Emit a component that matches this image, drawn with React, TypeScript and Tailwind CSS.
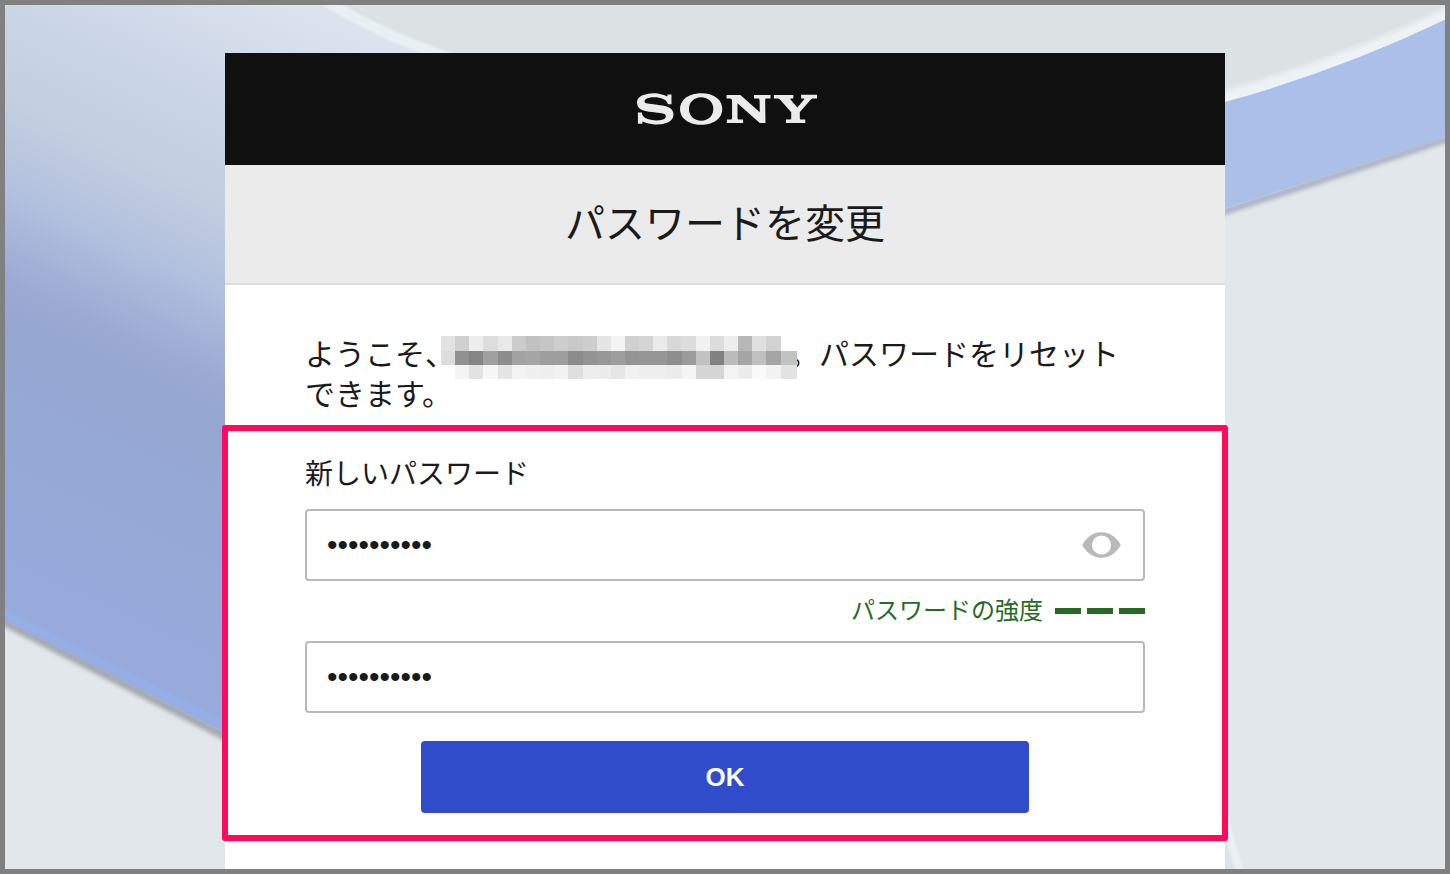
import { useState } from 'react';
import { SiSony } from 'react-icons/si';

// Grey levels of the masked account name, one [top, middle, bottom] per column
const MASK_COLUMNS = [
  ['#e2e2e2', '#dddddd', '#ffffff'],
  ['#d0d0d0', '#919191', '#f4f4f4'],
  ['#ededed', '#858585', '#e2e2e2'],
  ['#dddddd', '#a0a0a0', '#f6f6f6'],
  ['#e9e9e9', '#8d8d8d', '#e5e5e5'],
  ['#cbcbcb', '#a2a2a2', '#f3f3f3'],
  ['#c0c0c0', '#a5a5a5', '#f0f0f0'],
  ['#c6c6c6', '#9e9e9e', '#eeeeee'],
  ['#cdcdcd', '#9e9e9e', '#f2f2f2'],
  ['#c9c9c9', '#8c8c8c', '#dfdfdf'],
  ['#cdcdcd', '#939393', '#ededed'],
  ['#e5e5e5', '#979797', '#ececec'],
  ['#f4f4f4', '#9e9e9e', '#e6e6e6'],
  ['#d0d0d0', '#949494', '#f1f1f1'],
  ['#d5d5d5', '#969696', '#eeeeee'],
  ['#eaeaea', '#969696', '#eeeeee'],
  ['#d8d8d8', '#8e8e8e', '#ececec'],
  ['#dcdcdc', '#9b9b9b', '#f5f5f5'],
  ['#f1f1f1', '#c2c2c2', '#d5d5d5'],
  ['#dcdcdc', '#828282', '#d5d5d5'],
  ['#ededed', '#bbbbbb', '#f3f3f3'],
  ['#b7b7b7', '#a5a5a5', '#ececec'],
  ['#e0e0e0', '#c0c0c0', '#f9f9f9'],
  ['#d2d2d2', '#a5a5a5', '#f2f2f2'],
  ['#ffffff', '#c2c2c2', '#e2e2e2'],
];

function MaskedName() {
  return (
    <svg
      className="relative -my-2 -ml-5 -mr-2 inline-block h-[43px] w-[362px] align-middle"
      viewBox="0 0 362 43"
      shapeRendering="crispEdges"
      aria-hidden="true"
    >
      {MASK_COLUMNS.map((column, i) => {
        const x = Math.round(6 + i * 14.15);
        const width = i === MASK_COLUMNS.length - 1 ? 362 - x : 15;
        return (
          <g key={i}>
            <rect x={x} y="0" width={width} height="15" fill={column[0]} />
            <rect x={x} y="15" width={width} height="14" fill={column[1]} />
            <rect x={x} y="29" width={width} height="14" fill={column[2]} />
          </g>
        );
      })}
    </svg>
  );
}

function Backdrop() {
  return (
    <svg
      className="absolute inset-0 h-full w-full"
      viewBox="5 5 1440 864"
      preserveAspectRatio="none"
      aria-hidden="true"
    >
      <defs>
        <linearGradient id="wave" gradientUnits="userSpaceOnUse" x1="50" y1="-108" x2="-235" y2="504">
          <stop offset="0" stopColor="#dde3ee" />
          <stop offset="0.19" stopColor="#c9d4e6" />
          <stop offset="0.31" stopColor="#c3cee0" />
          <stop offset="0.43" stopColor="#b1c0de" />
          <stop offset="0.55" stopColor="#9aaad3" />
          <stop offset="0.61" stopColor="#95a6d0" />
          <stop offset="0.78" stopColor="#96a9d6" />
          <stop offset="0.97" stopColor="#98a9dc" />
        </linearGradient>
        <linearGradient id="floor" x1="0" y1="0" x2="0" y2="1">
          <stop offset="0" stopColor="#e3e7ec" />
          <stop offset="0.5" stopColor="#e1e7ea" />
        </linearGradient>
        <filter id="soft" x="-10%" y="-10%" width="120%" height="120%">
          <feGaussianBlur stdDeviation="2" />
        </filter>
        <filter id="softer" x="-50%" y="-10%" width="200%" height="120%">
          <feGaussianBlur stdDeviation="1" />
        </filter>
      </defs>
      <rect x="5" y="5" width="1440" height="864" fill="url(#floor)" />

      {/* Left wave */}
      <path d="M-20 609L5 622L235 741" fill="none" stroke="#a4a8b1" strokeWidth="9" filter="url(#soft)" />
      <path d="M-5 -5H310C350 22 440 62 520 80V745H250L5 620Z" fill="url(#wave)" />
      <path d="M-5 609L5 614L235 731" fill="none" stroke="#95aee6" strokeWidth="9" filter="url(#softer)" />

      {/* Right band */}
      <path d="M1200 220L1225 212Q1340 174 1455 137" fill="none" stroke="#b0b6c6" strokeWidth="6" filter="url(#soft)" />
      <path d="M1200 90L1225 96Q1345 64 1455 10V134Q1340 171 1225 208L1200 216Z" fill="#acbfe9" />
      <path d="M1200 219L1225 211Q1340 173 1455 136" fill="none" stroke="#b0b8cc" strokeWidth="4" filter="url(#softer)" />

      {/* Upper sheet and its bright rim */}
      <path d="M318 -5Q400 42 500 66H1225Q1345 48 1455 -5Z" fill="#dce1e4" />
      <path d="M1200 80H1225V91Q1345 58 1455 3V-5H1200Z" fill="#dce1e4" />
      <path d="M316 -5C356 20 396 40 455 60" fill="none" stroke="#e9f0f3" strokeWidth="10" filter="url(#softer)" />
      <path d="M1200 98L1225 91Q1345 57 1455 4V15Q1345 69 1225 102L1200 108Z" fill="#edf2f7" />
      <path d="M1215 94L1225 91Q1345 57 1455 4" fill="none" stroke="#e5eaee" strokeWidth="4" filter="url(#softer)" />

      {/* Lower right fold */}
      <path d="M1215 810L1235 869H1215Z" fill="#dae2f0" />
      <path d="M1222 810Q1230 840 1241 875" fill="none" stroke="#ebf0f3" strokeWidth="8" filter="url(#softer)" />
    </svg>
  );
}

function EyeIcon() {
  return (
    <svg className="h-[26px] w-[39px]" viewBox="0 0 39 26" fill="#b9b9b9" aria-hidden="true">
      <path
        fillRule="evenodd"
        d="M0.2 13C5 4.6 11.5 0.3 19.5 0.3S34 4.6 38.8 13C34 21.4 27.5 25.7 19.5 25.7S5 21.4 0.2 13ZM19.5 3.4A9.6 9.6 0 1 0 19.5 22.6A9.6 9.6 0 1 0 19.5 3.4Z"
      />
    </svg>
  );
}

interface PasswordFieldProps {
  id: string;
  value: string;
  onChange: (value: string) => void;
  label?: string;
  visible?: boolean;
  onToggle?: () => void;
}

function PasswordField({ id, value, onChange, label, visible, onToggle }: PasswordFieldProps) {
  return (
    <div className="relative">
      <input
        id={id}
        type={visible ? 'text' : 'password'}
        value={value}
        aria-label={label}
        onChange={(e) => onChange(e.target.value)}
        className="block h-[72px] w-full rounded border-2 border-[#b9b9b9] bg-white px-5 text-[30px] text-[#1a1a1a] outline-none"
      />
      {onToggle && (
        <button
          type="button"
          aria-label="パスワードを表示"
          onClick={onToggle}
          className="absolute inset-y-0 right-6 flex items-center"
        >
          <EyeIcon />
        </button>
      )}
    </div>
  );
}

export default function App() {
  const [password, setPassword] = useState('Passw0rd!1');
  const [confirm, setConfirm] = useState('Passw0rd!1');
  const [visible, setVisible] = useState(false);

  return (
    <div className="relative flex min-h-screen flex-col overflow-hidden border-[5px] border-[#808080] font-['Liberation_Sans','Noto_Sans_CJK_JP',sans-serif] text-[#1a1a1a]">
      <Backdrop />

      <main className="relative mx-auto mt-12 flex w-full max-w-[1000px] flex-1 flex-col bg-white">
        <header className="flex h-28 items-center justify-center bg-[#101010] pl-1">
          <SiSony viewBox="0 9.87 24 4.26" className="h-8 w-[180px] text-[#ebebeb]" title="SONY" />
        </header>

        <div className="flex h-[120px] items-center justify-center border-b-2 border-[#dddddd] bg-[#ebebeb]">
          <h1 className="text-[40px] leading-[60px]">パスワードを変更</h1>
        </div>

        <p className="mb-[10px] px-20 pt-[50px] text-[30px] leading-10">
          ようこそ、
          <MaskedName />
          。パスワードをリセットできます。
        </p>

        <form
          className="-mx-[3px] rounded-[3px] border-[6px] border-[#ff0a5a] px-[77px] pb-[22px] pt-6"
          onSubmit={(e) => e.preventDefault()}
        >
          <label htmlFor="new-password" className="mb-[14px] block text-[28px] leading-10">
            新しいパスワード
          </label>
          <PasswordField
            id="new-password"
            value={password}
            onChange={setPassword}
            visible={visible}
            onToggle={() => setVisible(!visible)}
          />

          {/* Strength meter */}
          <div className="flex h-[60px] items-center justify-end gap-3 text-[24px] text-[#246b24]">
            <span>パスワードの強度</span>
            <div className="flex gap-[6px]">
              {[1, 2, 3].map((i) => (
                <div key={i} className="h-[6px] w-[26px] bg-[#246b24]"></div>
              ))}
            </div>
          </div>

          <PasswordField
            id="confirm-password"
            label="新しいパスワード(確認)"
            value={confirm}
            onChange={setConfirm}
            visible={visible}
          />

          <div className="mt-7 flex justify-center">
            <button
              type="submit"
              className="h-[72px] w-full max-w-[608px] rounded bg-[#304ccb] text-[26px] font-bold text-white"
            >
              OK
            </button>
          </div>
        </form>
      </main>
    </div>
  );
}
